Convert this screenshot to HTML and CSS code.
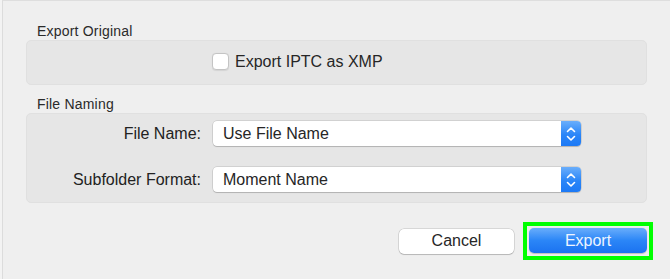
FILE: index.html
```html
<!DOCTYPE html>
<html>
<head>
<meta charset="utf-8">
<link rel="stylesheet" href="styles.css">
</head>
<body>
<div class="dialog">
  <div class="section-label">Export Original</div>
  <div class="box box-original">
    <label class="check">
      <span class="checkbox"></span>
      <span class="check-text">Export IPTC as XMP</span>
    </label>
  </div>

  <div class="section-label second">File Naming</div>
  <div class="box box-naming">
    <div class="row">
      <div class="row-label">File Name:</div>
      <div class="select">
        <span class="select-text">Use File Name</span>
        <span class="stepper">
          <svg width="10" height="16" viewBox="0 0 10 16"><path d="M1.5 5.5 L5 2 L8.5 5.5" fill="none" stroke="#fff" stroke-width="1.6" stroke-linecap="round" stroke-linejoin="round"/><path d="M1.5 10.5 L5 14 L8.5 10.5" fill="none" stroke="#fff" stroke-width="1.6" stroke-linecap="round" stroke-linejoin="round"/></svg>
        </span>
      </div>
    </div>
    <div class="row">
      <div class="row-label">Subfolder Format:</div>
      <div class="select">
        <span class="select-text">Moment Name</span>
        <span class="stepper">
          <svg width="10" height="16" viewBox="0 0 10 16"><path d="M1.5 5.5 L5 2 L8.5 5.5" fill="none" stroke="#fff" stroke-width="1.6" stroke-linecap="round" stroke-linejoin="round"/><path d="M1.5 10.5 L5 14 L8.5 10.5" fill="none" stroke="#fff" stroke-width="1.6" stroke-linecap="round" stroke-linejoin="round"/></svg>
        </span>
      </div>
    </div>
  </div>

  <div class="buttons">
    <button class="btn btn-cancel">Cancel</button>
    <div class="highlight">
      <button class="btn btn-export">Export</button>
    </div>
  </div>
</div>
</body>
</html>
```

FILE: styles.css
```css
html, body {
  margin: 0;
  padding: 0;
  background: #f3f3f3;
}
body {
  width: 670px;
  height: 279px;
  overflow: hidden;
  font-family: "Liberation Sans", Arial, sans-serif;
  color: #222;
}
.dialog {
  box-sizing: border-box;
  margin-left: 2px;
  height: 279px;
  border-left: 1px solid #dcdcdc;
  border-top: 1px solid #dedede;
  background: #efefef;
  padding: 22px 23px 0 23px;
  width: 668px;
}
.section-label {
  font-size: 14px;
  line-height: 16px;
  letter-spacing: 0.2px;
  color: #2a2a2a;
  padding-left: 11px;
  margin-bottom: 1px;
}
.section-label.second {
  margin-top: 11px;
}
.box {
  box-sizing: border-box;
  width: 621px;
  background: #e6e6e6;
  border: 1px solid #e0e0e0;
  border-radius: 5px;
}
.box-original {
  height: 45px;
  display: flex;
  align-items: center;
  padding-left: 185px;
  padding-bottom: 2px;
}
.check {
  display: flex;
  align-items: center;
  gap: 6px;
}
.checkbox {
  box-sizing: border-box;
  width: 17px;
  height: 17px;
  background: #fff;
  border: 1px solid #c4c4c4;
  border-radius: 4px;
  box-shadow: 0 0.5px 1px rgba(0,0,0,0.08);
}
.check-text {
  font-size: 16px;
  line-height: 18px;
  color: #262626;
}
.box-naming {
  height: 90px;
  padding-top: 7px;
  display: flex;
  flex-direction: column;
  gap: 21px;
}
.row {
  display: flex;
  align-items: center;
  gap: 12px;
}
.row-label {
  width: 174px;
  text-align: right;
  font-size: 16px;
  line-height: 25px;
  color: #222;
}
.select {
  box-sizing: border-box;
  width: 368px;
  height: 25px;
  background: #fff;
  border-radius: 4px;
  box-shadow: 0 0 0 0.5px rgba(0,0,0,0.18), 0 1px 1px rgba(0,0,0,0.15);
  display: flex;
  align-items: center;
  justify-content: space-between;
  overflow: hidden;
}
.select-text {
  padding-left: 10px;
  font-size: 16px;
  color: #262626;
}
.stepper {
  width: 20px;
  height: 25px;
  background: linear-gradient(#6aaefb, #2a86f8 55%, #1c79f5);
  display: flex;
  align-items: center;
  justify-content: center;
}
.buttons {
  display: flex;
  justify-content: flex-end;
  align-items: center;
  gap: 9px;
  margin-top: 19px;
  width: 627px;
}
.btn {
  font-family: "Liberation Sans", Arial, sans-serif;
  font-size: 16px;
  height: 25px;
  border-radius: 5px;
  padding: 0;
  border: none;
  display: block;
}
.btn-cancel {
  width: 115px;
  background: #fff;
  color: #262626;
  box-shadow: 0 0 0 0.5px rgba(0,0,0,0.2), 0 1px 1px rgba(0,0,0,0.15);
}
.highlight {
  border: 4px solid #00ff00;
  padding: 2px 2px 3px 2px;
  background: #eeeeee;
}
.btn-export {
  width: 118px;
  background: linear-gradient(#69adfb, #2b86f7 50%, #1b72f0);
  color: #eef5ff;
  box-shadow: 0 0.5px 1px rgba(0,0,0,0.2);
}
```
